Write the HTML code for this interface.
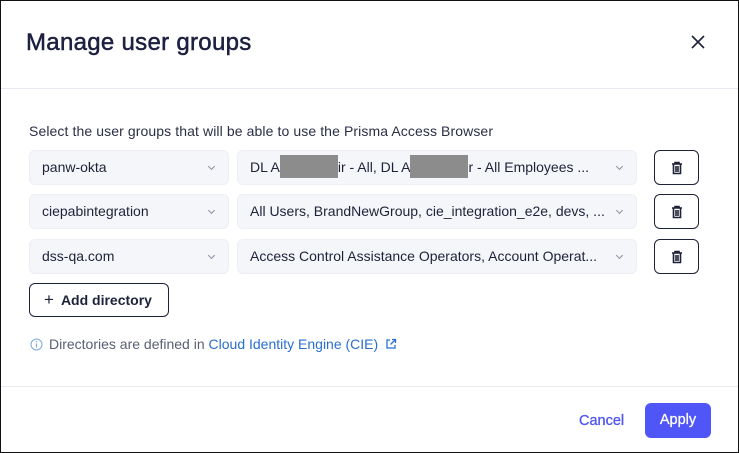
<!DOCTYPE html>
<html><head><style>
*{box-sizing:border-box;margin:0;padding:0}
body{width:739px;height:453px;background:#fff;font-family:"Liberation Sans",sans-serif;color:#1e2238;position:relative;overflow:hidden}
.frame{position:absolute;left:0;top:0;width:739px;height:453px;border:1px solid #111;}
.abs{position:absolute}
h1{position:absolute;left:26px;top:29px;font-size:24px;font-weight:normal;color:#1d2140;letter-spacing:0.3px;-webkit-text-stroke:0.5px #1d2140}
.hr{position:absolute;left:1px;right:1px;height:1px;background:#e8e9f0}
.lbl{left:29px;top:123px;font-size:14px;color:#2b2f45;letter-spacing:0.1px}
.sel{position:absolute;height:35px;background:#f5f6fa;border:1px solid #eceef3;border-radius:6px;font-size:14px;line-height:33px;padding-left:12px;color:#1e2238;white-space:nowrap;overflow:hidden}
.chev{position:absolute;right:14px;top:13px;width:5px;height:5px;border-right:1px solid #8a8fa0;border-bottom:1px solid #8a8fa0;transform:rotate(45deg)}
.del{position:absolute;left:654px;width:45px;height:35px;border:1px solid #1e2238;border-radius:6px;display:flex;align-items:center;justify-content:center}
.red{display:inline-block;width:58px;height:23px;background:#8c8c8c;vertical-align:middle;margin-top:-3px}
</style></head><body>
<div class="frame"></div>
<h1>Manage user groups</h1>
<svg class="abs" style="left:690px;top:34px" width="16" height="16" viewBox="0 0 16 16"><path d="M2 2L14 14M14 2L2 14" stroke="#1e2238" stroke-width="1.6"/></svg>
<div class="hr" style="top:88px"></div>
<div class="abs lbl">Select the user groups that will be able to use the Prisma Access Browser</div>

<div class="sel" style="left:29px;top:150px;width:200px">panw-okta<span class="chev"></span></div>
<div class="sel" style="left:237px;top:150px;width:400px">DL A<span class="red"></span>ir - All, DL A<span class="red"></span>r - All Employees ...<span class="chev"></span></div>
<div class="del" style="top:150px"><svg width="12" height="14" viewBox="0 0 12 14"><path d="M1 3H11M4 3V1.5H8V3M2.5 3V12.5H9.5V3M5 5V11M7 5V11" stroke="#1e2238" stroke-width="1.6" fill="none"/></svg></div>

<div class="sel" style="left:29px;top:194px;width:200px">ciepabintegration<span class="chev"></span></div>
<div class="sel" style="left:237px;top:194px;width:400px">All Users, BrandNewGroup, cie_integration_e2e, devs, ...<span class="chev"></span></div>
<div class="del" style="top:194px"><svg width="12" height="14" viewBox="0 0 12 14"><path d="M1 3H11M4 3V1.5H8V3M2.5 3V12.5H9.5V3M5 5V11M7 5V11" stroke="#1e2238" stroke-width="1.6" fill="none"/></svg></div>

<div class="sel" style="left:29px;top:239px;width:200px">dss-qa.com<span class="chev"></span></div>
<div class="sel" style="left:237px;top:239px;width:400px">Access Control Assistance Operators, Account Operat...<span class="chev"></span></div>
<div class="del" style="top:239px"><svg width="12" height="14" viewBox="0 0 12 14"><path d="M1 3H11M4 3V1.5H8V3M2.5 3V12.5H9.5V3M5 5V11M7 5V11" stroke="#1e2238" stroke-width="1.6" fill="none"/></svg></div>

<div class="abs" style="left:29px;top:283px;width:140px;height:34px;border:1px solid #1e2238;border-radius:6px;font-size:14px;line-height:32px;padding-left:14px;font-weight:bold;color:#1e2238"><span style="font-size:17px;font-weight:normal;margin-right:7px">+</span>Add directory</div>

<div class="abs" style="left:30px;top:336px;font-size:14px;color:#5a5f73;display:flex;align-items:center">
<svg width="13" height="13" viewBox="0 0 13 13" style="margin-right:6px"><circle cx="6.5" cy="6.5" r="5.5" fill="none" stroke="#7da7e0" stroke-width="1"/><path d="M6.5 5.5V9.5" stroke="#7da7e0" stroke-width="1.2"/><circle cx="6.5" cy="3.8" r="0.7" fill="#7da7e0"/></svg>
Directories are defined in&nbsp;<span style="color:#2a6fcf">Cloud Identity Engine (CIE)</span>
<svg width="12" height="12" viewBox="0 0 12 12" style="margin-left:7px"><path d="M5 2H2V10H10V7M7 1.5H10.5V5M10.5 1.5L5.5 6.5" stroke="#2a6fcf" stroke-width="1.3" fill="none"/></svg>
</div>

<div class="hr" style="top:386px"></div>
<div class="abs" style="left:579px;top:413px;font-size:14.5px;color:#4f55f0;-webkit-text-stroke:0.3px #4f55f0">Cancel</div>
<div class="abs" style="left:645px;top:403px;width:66px;height:35px;background:#4f55f7;border-radius:6px;color:#fff;font-size:14.5px;text-align:center;line-height:35px;-webkit-text-stroke:0.3px #fff">Apply</div>
</body></html>
